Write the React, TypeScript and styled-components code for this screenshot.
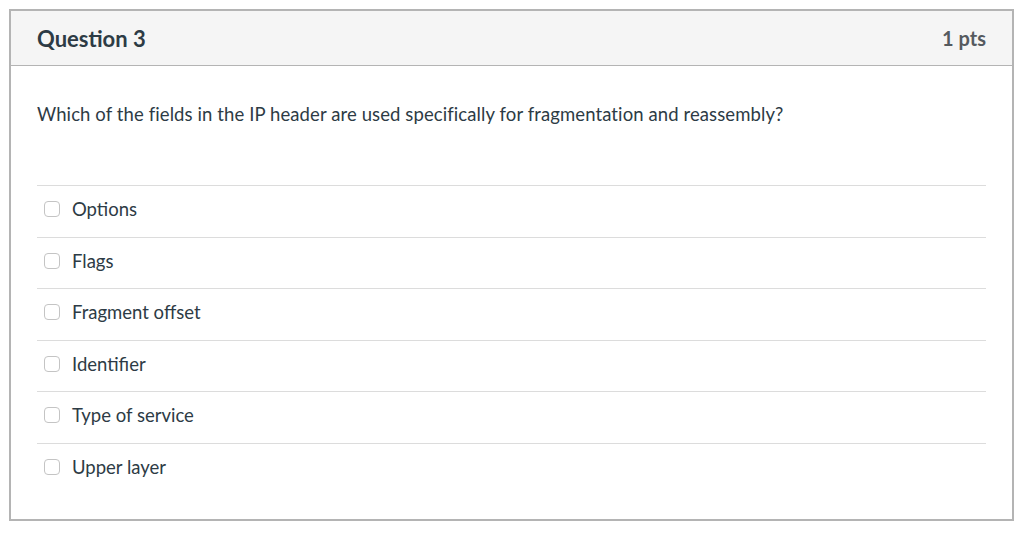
import React from "react";
import styled, { createGlobalStyle } from "styled-components";

const GlobalStyle = createGlobalStyle`
  html, body {
    margin: 0;
    padding: 0;
    background: #ffffff;
  }
  body {
    font-family: Lato, "Open Sans", "Liberation Sans", sans-serif;
    color: #2d3b45;
  }
`;

const Page = styled.div`
  padding: 9px 10px 16px 9px;
`;

const Card = styled.section`
  border: 2px solid #b4b4b4;
  background: #fff;
  width: 1005px;
  box-sizing: border-box;
`;

const Header = styled.header`
  display: flex;
  align-items: center;
  justify-content: space-between;
  height: 55px;
  padding: 0 26px;
  background: #f5f5f5;
  border-bottom: 1px solid #b4b4b4;
  box-sizing: border-box;
`;

const Title = styled.h2`
  margin: 0;
  font-size: 22px;
  font-weight: 700;
  color: #2d3b45;
`;

const Points = styled.span`
  font-size: 20px;
  font-weight: 700;
  color: #555a5f;
`;

const Body = styled.div`
  padding: 35px 26px 25px;
`;

const Prompt = styled.p`
  margin: 0 0 58px;
  font-size: 18.5px;
  line-height: 26px;
  letter-spacing: 0.1px;
`;

const Answers = styled.ul`
  list-style: none;
  margin: 0;
  padding: 0;
`;

const Answer = styled.li`
  display: flex;
  align-items: center;
  gap: 12px;
  height: 51.5px;
  padding-left: 7px;
  border-top: 1px solid #dcdcdc;
  box-sizing: border-box;
  font-size: 18.5px;
`;

const Box = styled.span`
  width: 16px;
  height: 16px;
  box-sizing: border-box;
  border: 1px solid #c4c4c4;
  border-radius: 4px;
  background: #fff;
  flex-shrink: 0;
  margin-top: -4px;
`;

const Label = styled.span`
  margin-top: -4px;
`;

const options = [
  "Options",
  "Flags",
  "Fragment offset",
  "Identifier",
  "Type of service",
  "Upper layer",
];

export default function App() {
  return (
    <>
      <GlobalStyle />
      <Page>
        <Card>
          <Header>
            <Title>Question 3</Title>
            <Points>1 pts</Points>
          </Header>
          <Body>
            <Prompt>
              Which of the fields in the IP header are used specifically for
              fragmentation and reassembly?
            </Prompt>
            <Answers>
              {options.map((o) => (
                <Answer key={o}>
                  <Box />
                  <Label>{o}</Label>
                </Answer>
              ))}
            </Answers>
          </Body>
        </Card>
      </Page>
    </>
  );
}
